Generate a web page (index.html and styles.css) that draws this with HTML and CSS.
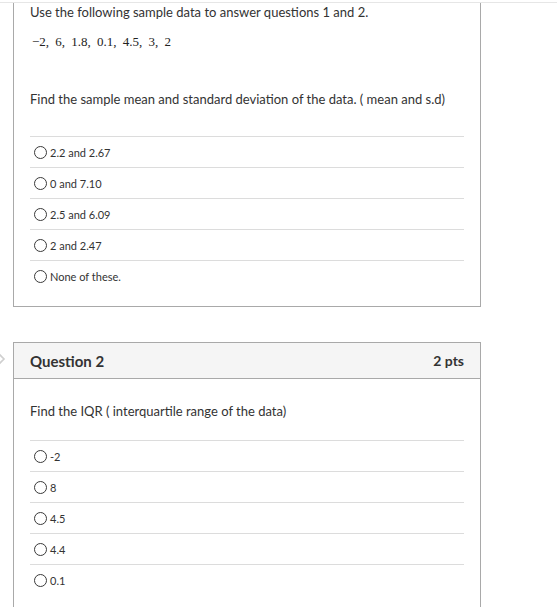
FILE: index.html
```html
<!DOCTYPE html>
<html>
<head>
<meta charset="utf-8">
<link rel="stylesheet" href="styles.css">
</head>
<body>
<div class="topline"></div>
<div class="card card-first">
  <div class="card-body first-body">
    <p class="lead">Use the following sample data to answer questions 1 and 2.</p>
    <p class="math">−2, 6, 1.8, 0.1, 4.5, 3, 2</p>
    <p class="prompt prompt-1">Find the sample mean and standard deviation of the data. ( mean and s.d)</p>
    <ul class="answers">
      <li class="answer"><span class="radio"></span>2.2 and 2.67</li>
      <li class="answer"><span class="radio"></span>0 and 7.10</li>
      <li class="answer"><span class="radio"></span>2.5 and 6.09</li>
      <li class="answer"><span class="radio"></span>2 and 2.47</li>
      <li class="answer"><span class="radio"></span>None of these.</li>
    </ul>
  </div>
</div>
<div class="question-row">
  <svg class="chevron" width="13" height="16" viewBox="0 0 13 16"><polyline points="-1,3 4,8 -1,13" fill="none" stroke="#cfcfcf" stroke-width="1.6"/></svg>
  <div class="card card-second">
    <div class="card-header">
      <span class="q-title">Question 2</span>
      <span class="q-pts">2 pts</span>
    </div>
    <div class="card-body second-body">
      <p class="prompt prompt-2">Find the IQR ( interquartile range of the data)</p>
      <ul class="answers">
        <li class="answer"><span class="radio"></span>-2</li>
        <li class="answer"><span class="radio"></span>8</li>
        <li class="answer"><span class="radio"></span>4.5</li>
        <li class="answer"><span class="radio"></span>4.4</li>
        <li class="answer"><span class="radio"></span>0.1</li>
      </ul>
    </div>
  </div>
</div>
</body>
</html>
```
FILE: styles.css
```css
html, body {
  margin: 0;
  padding: 0;
  background: #ffffff;
}
body {
  font-family: Lato, "Liberation Sans", sans-serif;
  color: #333333;
  overflow: hidden;
}
.topline {
  height: 2px;
  border-bottom: 1px solid #e6e6e6;
}
.card {
  width: 466px;
  border: 1px solid #a9a9a9;
  background: #fff;
}
.card-first {
  margin-left: 13px;
  border-top: none;
}
.card-body {
  padding: 0 16px 15px 16px;
}
p {
  margin: 0;
}
.lead {
  font-size: 13px;
  line-height: 18px;
}
.math {
  margin-top: 11px;
  font-family: "Liberation Serif", "DejaVu Serif", serif;
  font-size: 13px;
  word-spacing: 3px;
  line-height: 20px;
  padding-left: 2px;
  color: #222;
}
.prompt {
  font-size: 13px;
  line-height: 20px;
}
.prompt-1 {
  margin-top: 37px;
  margin-bottom: 27px;
}
.answers {
  list-style: none;
  margin: 0;
  padding: 0;
}
.answer {
  display: flex;
  align-items: center;
  height: 30px;
  border-top: 1px solid #dcdcdc;
  padding-left: 4px;
  font-size: 11px;
  gap: 3px;
}
.radio {
  width: 11px;
  height: 11px;
  border: 1px solid #3a3a3a;
  border-radius: 50%;
  flex: none;
}
.question-row {
  display: flex;
  align-items: flex-start;
  margin-top: 35px;
}
.chevron {
  margin-top: 9px;
  flex: none;
}
.card-second {
  height: 400px;
}
.card-header {
  display: flex;
  justify-content: space-between;
  align-items: center;
  height: 35px;
  padding: 0 16px;
  background: #f5f5f5;
  border-bottom: 1px solid #a9a9a9;
  font-weight: bold;
}
.q-title {
  font-size: 15px;
}
.q-pts {
  font-size: 14px;
}
.second-body {
  padding-top: 22px;
}
.prompt-2 {
  margin-bottom: 19px;
}
```
